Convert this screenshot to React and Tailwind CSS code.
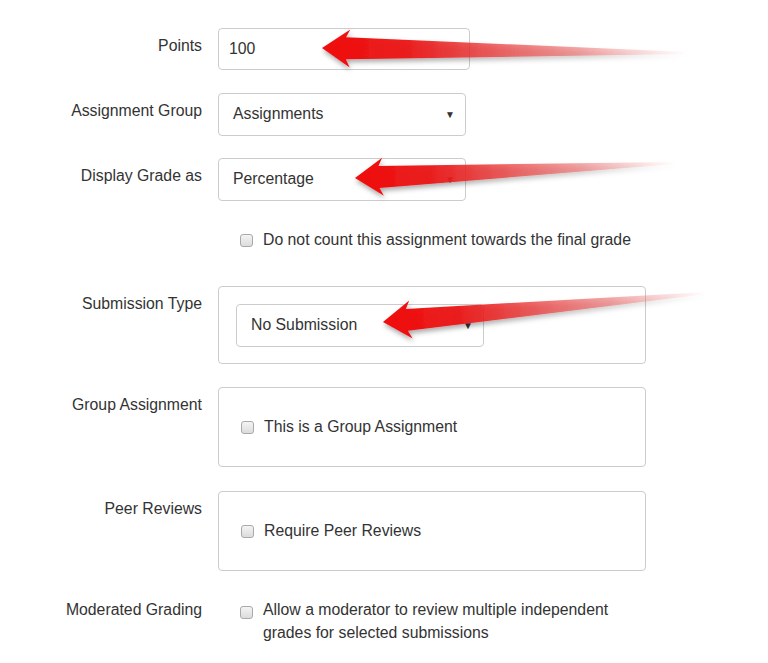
import React from "react";

function arrowPoints(tip, tail, headLen = 24, headHalf = 19, shaftHalf = 11, tailHalf = 1) {
  const dx = tail[0] - tip[0];
  const dy = tail[1] - tip[1];
  const len = Math.hypot(dx, dy);
  const ux = dx / len, uy = dy / len;
  const nx = -uy, ny = ux;
  const hb = [tip[0] + ux * headLen, tip[1] + uy * headLen];
  const p = (base, w) => [base[0] + nx * w, base[1] + ny * w];
  const pts = [
    tip,
    p([hb[0] + ux * 4, hb[1] + uy * 4], -headHalf),
    p(hb, -shaftHalf),
    p(tail, -tailHalf),
    p(tail, tailHalf),
    p(hb, shaftHalf),
    p([hb[0] + ux * 4, hb[1] + uy * 4], headHalf),
  ];
  return pts.map((q) => q[0].toFixed(1) + "," + q[1].toFixed(1)).join(" ");
}

const arrows = [
  { id: "a1", tip: [322, 48], tail: [688, 53] },
  { id: "a2", tip: [355, 178], tail: [676, 163] },
  { id: "a3", tip: [383, 322], tail: [707, 293] },
];

function Arrows() {
  return (
    <svg className="absolute left-0 top-0 pointer-events-none" width="768" height="663" viewBox="0 0 768 663">
      <defs>
        <filter id="sh" x="-10%" y="-50%" width="120%" height="200%">
          <feDropShadow dx="1" dy="3" stdDeviation="2.5" floodColor="#000" floodOpacity="0.35" />
        </filter>
        {arrows.map((a) => (
          <linearGradient key={a.id} id={a.id} gradientUnits="userSpaceOnUse" x1={a.tip[0]} y1={a.tip[1]} x2={a.tail[0]} y2={a.tail[1]}>
            <stop offset="0" stopColor="#f00a0a" stopOpacity="1" />
            <stop offset="0.25" stopColor="#ea1a1a" stopOpacity="0.95" />
            <stop offset="0.7" stopColor="#e85050" stopOpacity="0.5" />
            <stop offset="1" stopColor="#f07070" stopOpacity="0" />
          </linearGradient>
        ))}
      </defs>
      {arrows.map((a) => (
        <polygon key={a.id} points={arrowPoints(a.tip, a.tail)} fill={`url(#${a.id})`} filter="url(#sh)" />
      ))}
    </svg>
  );
}

function Checkbox() {
  return <span className="inline-block w-[13px] h-[13px] shrink-0 rounded-[3px] border border-[#a9a9a9] bg-gradient-to-b from-[#f4f4f4] to-[#dcdcdc]" />;
}

function Select({ value, w = "w-[248px]" }) {
  return (
    <div className={`${w} h-[43px] border border-[#ccc] rounded-[4px] bg-white flex items-center pl-[14px] pr-[10px] pb-[1px] justify-between`}>
      <span>{value}</span>
      <span className="text-[10px] text-[#333]">▼</span>
    </div>
  );
}

function Row({ label, children, className = "" }) {
  return (
    <div className={`flex ${className}`}>
      <div className="w-[202px] shrink-0 text-right pt-[8px] leading-[20px]">{label}</div>
      <div className="ml-4">{children}</div>
    </div>
  );
}

export default function App() {
  return (
    <div className="relative w-[768px] h-[663px] bg-white overflow-hidden text-[#333] text-[15.8px] font-['Liberation_Sans',Arial,sans-serif]">
      <div className="flex flex-col pt-[28px]">
        <Row label="Points">
          <div className="w-[252px] h-[42px] border border-[#ccc] rounded-[4px] flex items-center pl-[10px]">100</div>
        </Row>
        <Row label="Assignment Group" className="mt-[23px]">
          <Select value="Assignments" />
        </Row>
        <Row label="Display Grade as" className="mt-[22px]">
          <Select value="Percentage" />
        </Row>
        <div className="flex items-center mt-[24px] ml-[240px] gap-[10px] h-[30px]">
          <Checkbox />
          <span>Do not count this assignment towards the final grade</span>
        </div>
        <Row label="Submission Type" className="mt-[31px]">
          <div className="w-[428px] h-[78px] border border-[#ccc] rounded-[4px] p-[17px]">
            <Select value="No Submission" />
          </div>
        </Row>
        <Row label="Group Assignment" className="mt-[23px]">
          <div className="w-[428px] h-[80px] border border-[#ccc] rounded-[4px] flex items-center pl-[22px] gap-[10px]">
            <Checkbox />
            <span>This is a Group Assignment</span>
          </div>
        </Row>
        <Row label="Peer Reviews" className="mt-[24px]">
          <div className="w-[428px] h-[80px] border border-[#ccc] rounded-[4px] flex items-center pl-[22px] gap-[10px]">
            <Checkbox />
            <span>Require Peer Reviews</span>
          </div>
        </Row>
        <Row label="Moderated Grading" className="mt-[21px]">
          <div className="flex gap-[10px] pl-[22px] pt-[6px]">
            <div className="pt-[4px]"><Checkbox /></div>
            <span className="leading-[23px]">Allow a moderator to review multiple independent<br />grades for selected submissions</span>
          </div>
        </Row>
      </div>
      <Arrows />
    </div>
  );
}
